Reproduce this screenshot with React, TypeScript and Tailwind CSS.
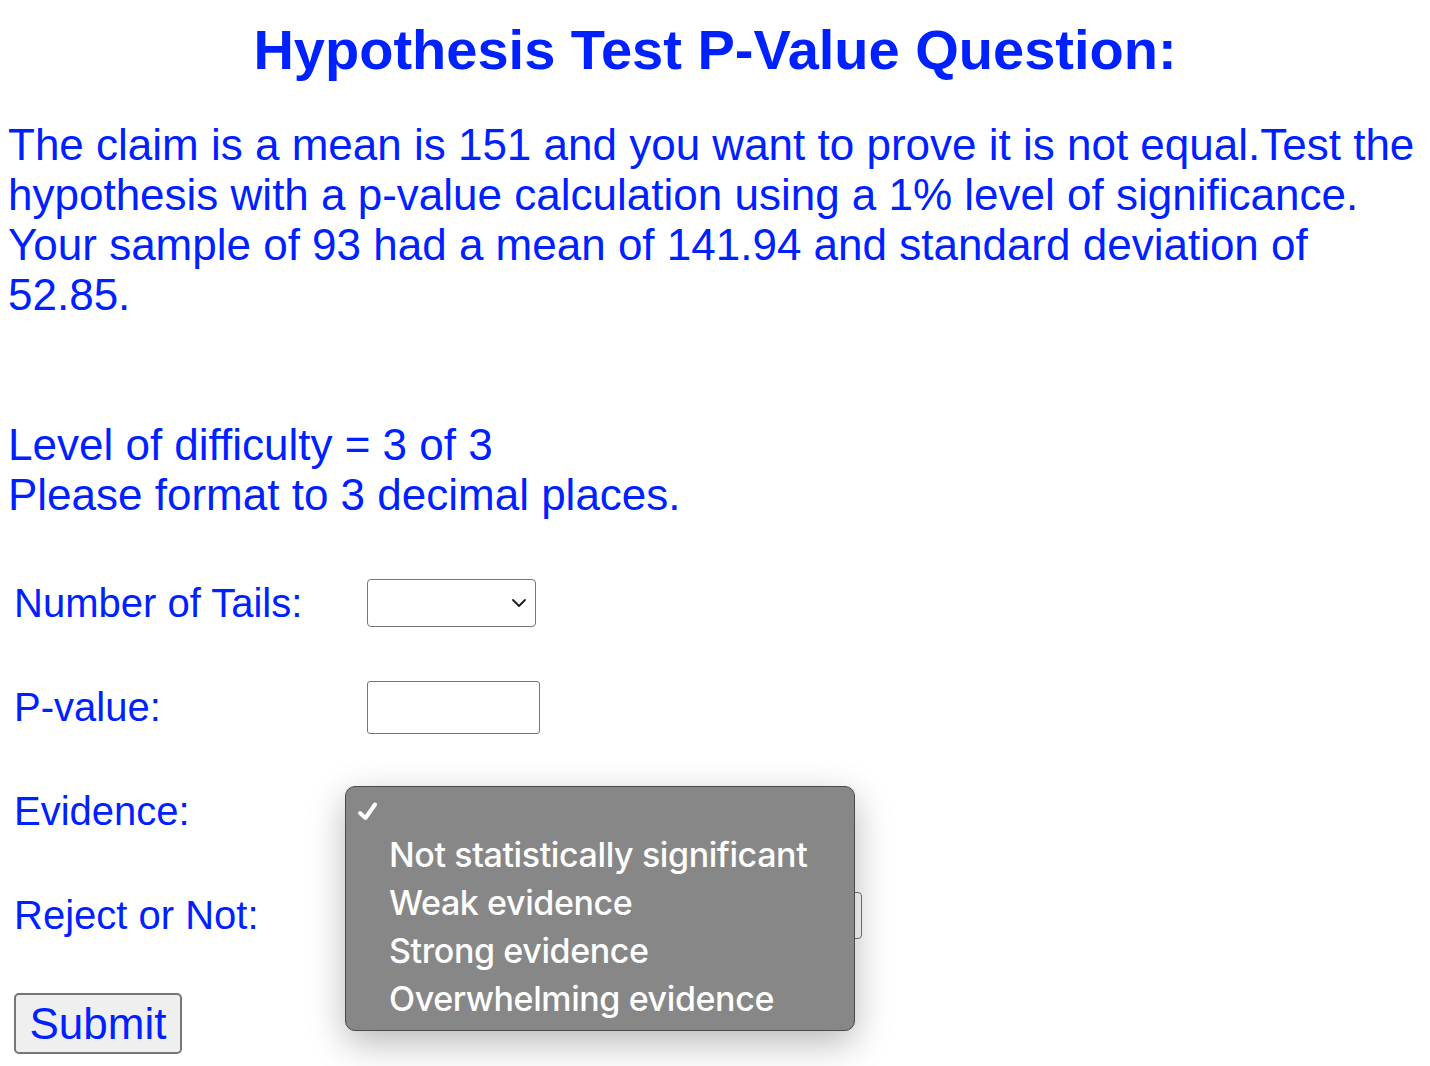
import React from "react";

const blue = "text-[#0021ff]";

function Chevron() {
  return (
    <svg width="16" height="10" viewBox="0 0 16 10" className="text-[#1a1a1a]" aria-hidden>
      <path d="M2 2 L8 8 L14 2" fill="none" stroke="currentColor" strokeWidth="1.8" strokeLinecap="round" strokeLinejoin="round" />
    </svg>
  );
}

function Check() {
  return (
    <svg width="22" height="20" viewBox="0 0 22 20" aria-hidden>
      <path d="M3 12 L8.5 17 L18 3.5" fill="none" stroke="white" strokeWidth="4" strokeLinecap="round" strokeLinejoin="round" />
    </svg>
  );
}

function EvidenceMenu() {
  const options = [
    "Not statistically significant",
    "Weak evidence",
    "Strong evidence",
    "Overwhelming evidence",
  ];
  return (
    <div className="absolute left-[-22px] top-[27px] z-10 w-[510px] h-[245px] rounded-[10px] border border-[#4a4a4a] bg-[#878787] shadow-[0_12px_36px_rgba(0,0,0,0.28)] py-[1px] font-['Inter',sans-serif] text-white">
      <div className="h-[48px] flex items-center pl-[11px] pb-[2px]">
        <Check />
      </div>
      {options.map((o) => (
        <div key={o} className="h-[48px] flex items-center pl-[43px] pb-[12px] text-[34px] font-medium tracking-[-0.4px]">
          {o}
        </div>
      ))}
    </div>
  );
}

export default function App() {
  return (
    <div className={`min-h-[1066px] bg-white px-[8px] font-['Liberation_Sans',Arial,sans-serif] ${blue}`}>
      <h1 className="pt-[18px] text-center text-[56px] leading-[64px] font-bold">
        Hypothesis Test P-Value Question:
      </h1>

      <p className="mt-[38px] text-[44px] leading-[50px]">
        The claim is a mean is 151 and you want to prove it is not equal.Test the hypothesis with a p-value
        calculation using a 1% level of significance. Your sample of 93 had a mean of 141.94 and standard
        deviation of 52.85.
      </p>

      <div className="mt-[100px] text-[44px] leading-[50px]">
        <div>Level of difficulty = 3 of 3</div>
        <div>Please format to 3 decimal places.</div>
      </div>

      <div className="mt-[31px] grid grid-cols-[359px_1fr] text-[40px]">
        <div className="h-[104px] flex items-center pl-[6px]">Number of Tails:</div>
        <div className="h-[104px] flex items-center">
          <div className="w-[169px] h-[48px] rounded-[4px] border-[1.5px] border-[#767676] bg-white flex items-center justify-end pr-[8px]">
            <Chevron />
          </div>
        </div>

        <div className="h-[104px] flex items-center pl-[6px]">P-value:</div>
        <div className="h-[104px] flex items-center">
          <div className="w-[173px] h-[53px] rounded-[3px] border-[1.5px] border-[#767676] bg-white" />
        </div>

        <div className="h-[104px] flex items-center pl-[6px]">Evidence:</div>
        <div className="relative h-[104px] flex items-center">
          <div className="w-[400px] h-[47px] rounded-[4px] border-[1.5px] border-[#767676] bg-white" />
          <EvidenceMenu />
        </div>

        <div className="h-[104px] flex items-center pl-[6px]">Reject or Not:</div>
        <div className="h-[104px] flex items-center">
          <div className="w-[495px] h-[47px] rounded-[4px] border-[1.5px] border-[#767676] bg-white" />
        </div>
      </div>

      <button
        type="button"
        className="mt-[26px] ml-[6px] w-[168px] h-[61px] rounded-[5px] border-2 border-[#767676] bg-[#efefef] text-[44px] leading-none flex items-center justify-center"
      >
        Submit
      </button>
    </div>
  );
}
